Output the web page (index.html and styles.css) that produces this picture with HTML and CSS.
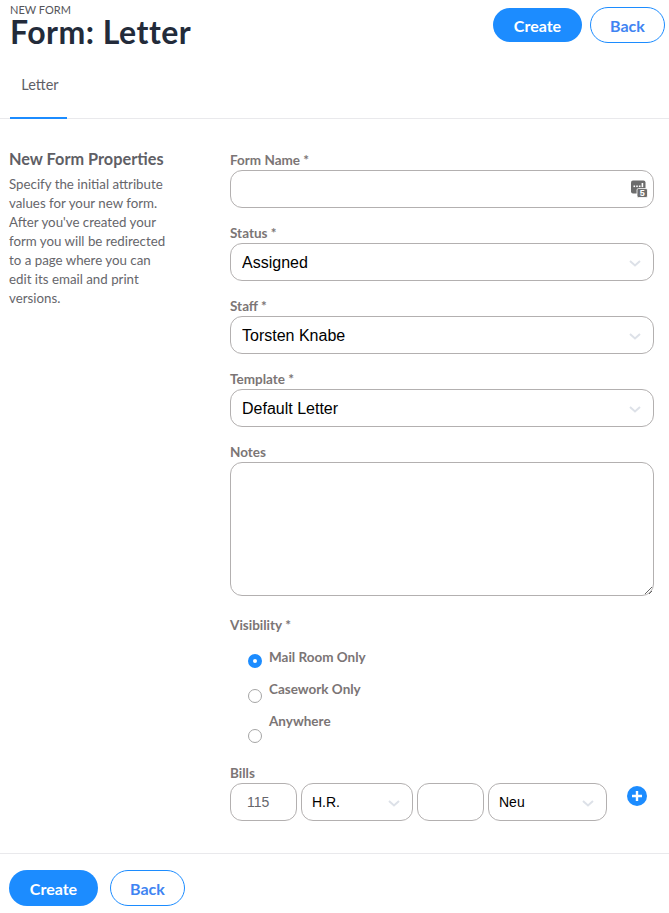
FILE: index.html
```html
<!DOCTYPE html>
<html lang="en">
<head>
    <meta charset="UTF-8">
    <meta name="viewport" content="width=device-width, initial-scale=1.0">
    <title>New Form: Letter</title>
    <link rel="stylesheet" href="styles.css">
</head>
<body>

    <!-- Header -->
    <div class="header">
        <div class="header-title">
            <div class="eyebrow">NEW FORM</div>
            <h1>Form: Letter</h1>
        </div>
        <div class="header-actions">
            <button class="button button-primary" type="button">Create</button>
            <button class="button button-outline" type="button">Back</button>
        </div>
    </div>

    <!-- Tabs -->
    <div class="tabs">
        <a href="#" class="tab">Letter</a>
    </div>

    <div class="content">
        <!-- Sidebar text -->
        <div class="sidebar">
            <h2>New Form Properties</h2>
            <p>Specify the initial attribute values for your new form. After you've created your form you will be redirected to a page where you can edit its email and print versions.</p>
        </div>

        <!-- Form -->
        <form class="form">
            <div class="field">
                <label for="name">Form Name *</label>
                <div class="control">
                    <input type="text" id="name" class="input">
                    <svg class="merge-icon" width="18" height="18" viewBox="0 0 18 18">
                        <rect x="0" y="0.5" width="14.5" height="13" rx="2" fill="#6d6d6d"/>
                        <rect x="2.5" y="5.5" width="1.6" height="1.6" fill="#fff"/>
                        <rect x="5.2" y="5.5" width="1.6" height="1.6" fill="#fff"/>
                        <rect x="7.9" y="5.5" width="1.6" height="1.6" fill="#fff"/>
                        <rect x="10.6" y="3" width="1.6" height="4.1" fill="#fff"/>
                        <rect x="6" y="8.5" width="10.5" height="9" rx="1.5" fill="#6d6d6d" stroke="#fff" stroke-width="0.8"/>
                        <text x="11.2" y="16.3" class="merge-digit">5</text>
                    </svg>
                </div>
            </div>

            <div class="field">
                <label for="status">Status *</label>
                <div class="control">
                    <select id="status" class="select"><option>Assigned</option></select>
                    <svg class="chevron" width="12" height="7" viewBox="0 0 12 7"><path d="M1 1l5 4.5L11 1" fill="none" stroke="#dde1e8" stroke-width="2"/></svg>
                </div>
            </div>

            <div class="field">
                <label for="staff">Staff *</label>
                <div class="control">
                    <select id="staff" class="select"><option>Torsten Knabe</option></select>
                    <svg class="chevron" width="12" height="7" viewBox="0 0 12 7"><path d="M1 1l5 4.5L11 1" fill="none" stroke="#dde1e8" stroke-width="2"/></svg>
                </div>
            </div>

            <div class="field">
                <label for="template">Template *</label>
                <div class="control">
                    <select id="template" class="select"><option>Default Letter</option></select>
                    <svg class="chevron" width="12" height="7" viewBox="0 0 12 7"><path d="M1 1l5 4.5L11 1" fill="none" stroke="#dde1e8" stroke-width="2"/></svg>
                </div>
            </div>

            <div class="field">
                <label for="notes">Notes</label>
                <textarea id="notes" class="textarea"></textarea>
            </div>

            <div class="field-visibility">
                <label>Visibility *</label>
                <div class="radio-list">
                    <div class="radio-item">
                        <span class="radio radio-on"></span>
                        <span class="radio-label">Mail Room Only</span>
                    </div>
                    <div class="radio-item">
                        <span class="radio"></span>
                        <span class="radio-label">Casework Only</span>
                    </div>
                    <div class="radio-item radio-item-last">
                        <span class="radio"></span>
                        <span class="radio-label">Anywhere</span>
                    </div>
                </div>
            </div>

            <div class="field-bills">
                <label>Bills</label>
                <div class="bill-row">
                    <input type="text" class="input bill-number" value="115">
                    <div class="control bill-chamber">
                        <select class="select bill-select"><option>H.R.</option></select>
                        <svg class="chevron" width="12" height="7" viewBox="0 0 12 7"><path d="M1 1l5 4.5L11 1" fill="none" stroke="#dde1e8" stroke-width="2"/></svg>
                    </div>
                    <input type="text" class="input bill-number bill-extra">
                    <div class="control bill-version">
                        <select class="select bill-select"><option>Neu</option></select>
                        <svg class="chevron" width="12" height="7" viewBox="0 0 12 7"><path d="M1 1l5 4.5L11 1" fill="none" stroke="#dde1e8" stroke-width="2"/></svg>
                    </div>
                    <svg class="add-icon" width="20" height="20" viewBox="0 0 20 20">
                        <circle cx="10" cy="10" r="10" fill="#1c8cff"/>
                        <path d="M10 5v10M5 10h10" stroke="#fff" stroke-width="2.4"/>
                    </svg>
                </div>
            </div>
        </form>
    </div>

    <!-- Footer -->
    <div class="footer">
        <button class="button button-primary" type="button">Create</button>
        <button class="button button-outline" type="button">Back</button>
    </div>

</body>
</html>
```

FILE: styles.css
```css
body {
    font-family: Lato, Arial, sans-serif;
    background-color: #fff;
    margin: 0;
    color: #6b6b70;
}

.header {
    display: flex;
    justify-content: space-between;
    height: 53px;
    padding: 4px 4px 0 10px;
}

.eyebrow {
    font-size: 11px;
    line-height: 12px;
    color: #55555a;
}

h1 {
    margin: 0;
    font-size: 32px;
    line-height: 32px;
    font-weight: 700;
    letter-spacing: 0.5px;
    color: #232b3a;
}

.header-actions {
    display: flex;
    gap: 8px;
    align-items: flex-start;
    padding-top: 3px;
}

.button {
    font-family: Lato, Arial, sans-serif;
    font-size: 16px;
    font-weight: 700;
    height: 36px;
    border-radius: 18px;
    cursor: pointer;
}

.button-primary {
    width: 89px;
    background-color: #1c8cff;
    border: none;
    color: #fff;
}

.button-outline {
    width: 75px;
    background-color: #fff;
    border: 1px solid #1c8cff;
    color: #3f84f2;
}

.header-actions .button-primary {
    height: 34px;
    margin-top: 1px;
}

.tabs {
    height: 61px;
    padding-left: 10px;
    border-bottom: 1px solid #e9e9ec;
}

.tab {
    display: block;
    box-sizing: border-box;
    width: 57px;
    height: 62px;
    padding: 19px 0 0 3px;
    text-align: center;
    font-size: 14.5px;
    line-height: 18px;
    color: #5f5f66;
    text-decoration: none;
    border-bottom: 2px solid #1c8cff;
}

.content {
    display: flex;
    padding: 30px 15px 0 9px;
    height: 734px;
    box-sizing: border-box;
}

.sidebar {
    width: 221px;
    flex-shrink: 0;
}

.sidebar h2 {
    margin: 0;
    font-size: 16.3px;
    line-height: 20px;
    font-weight: 700;
    color: #5f5f66;
}

.sidebar p {
    margin: 6px 0 0;
    width: 160px;
    font-size: 13.3px;
    line-height: 19px;
    color: #66666b;
}

.form {
    flex: 1;
}

.field {
    margin-bottom: 14px;
}

label {
    display: block;
    font-size: 13.5px;
    line-height: 15px;
    font-weight: 700;
    color: #7b7575;
    padding-top: 4px;
    margin-bottom: 2px;
}

.control {
    position: relative;
}

.input,
.select,
.textarea {
    display: block;
    box-sizing: border-box;
    width: 100%;
    height: 38px;
    margin: 0;
    padding: 0 11px;
    background-color: #fff;
    border: 1px solid #b3b0b0;
    border-radius: 12px;
    font-family: "Liberation Sans", Arial, sans-serif;
    font-size: 16px;
    color: #000;
    outline: none;
    appearance: none;
}

.textarea {
    height: 134px;
    margin-bottom: 18px;
}

.chevron {
    position: absolute;
    right: 13px;
    top: 17px;
    pointer-events: none;
}

.merge-icon {
    position: absolute;
    right: 5px;
    top: 10px;
}

.merge-digit {
    font-family: "Liberation Sans", Arial, sans-serif;
    font-size: 9px;
    font-weight: 700;
    fill: #fff;
    text-anchor: middle;
}

.radio-list {
    padding: 14px 0 0 18px;
}

.radio-item {
    display: flex;
    gap: 7px;
    height: 32px;
}

.radio-item-last {
    height: 35px;
}

.radio {
    box-sizing: border-box;
    width: 14px;
    height: 14px;
    border: 1px solid #a5a5a5;
    border-radius: 50%;
    background-color: #fff;
}

.radio-on {
    margin-top: 5px;
    border: 5px solid #1c8cff;
}

.radio-item:nth-child(2) .radio {
    margin-top: 8px;
}

.radio-item-last .radio {
    margin-top: 16px;
}

.radio-label {
    font-size: 13.5px;
    line-height: 16px;
    font-weight: 700;
    color: #7b7575;
}

.field-bills {
    margin-top: 18px;
}

.field-bills label {
    padding-top: 0;
    margin-bottom: 2px;
}

.bill-row {
    display: flex;
    align-items: flex-start;
    gap: 4px;
}

.bill-number {
    width: 67px;
    padding-left: 16px;
    font-size: 14px;
    color: #66666b;
}

.bill-chamber {
    width: 112px;
}

.bill-version {
    width: 119px;
}

.bill-select {
    padding: 0 10px;
    font-size: 14px;
}

.add-icon {
    margin: 3px 0 0 16px;
}

.footer {
    display: flex;
    gap: 12px;
    padding: 16px 0 0 9px;
    border-top: 1px solid #e9e9ec;
}
```
